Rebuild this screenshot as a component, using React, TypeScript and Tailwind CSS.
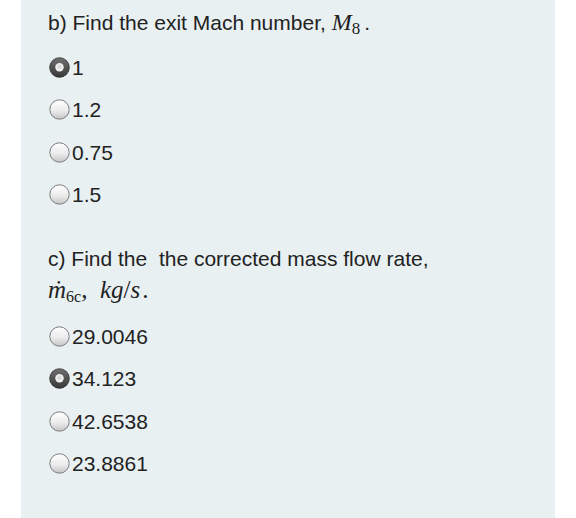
import React from "react";

type Opt = { label: string; checked?: boolean };

const partB: Opt[] = [{ label: "1", checked: true }, { label: "1.2" }, { label: "0.75" }, { label: "1.5" }];
const partC: Opt[] = [
  { label: "29.0046" },
  { label: "34.123", checked: true },
  { label: "42.6538" },
  { label: "23.8861" },
];

function Radio({ checked }: { checked?: boolean }) {
  return (
    <svg width="21" height="21" viewBox="0 0 21 21" className="shrink-0">
      <defs>
        <linearGradient id="rOff" x1="0" y1="0" x2="0" y2="1">
          <stop offset="0" stopColor="#ffffff" />
          <stop offset="0.55" stopColor="#ececec" />
          <stop offset="1" stopColor="#c4c4c4" />
        </linearGradient>
        <linearGradient id="rOn" x1="0" y1="0" x2="0" y2="1">
          <stop offset="0" stopColor="#707070" />
          <stop offset="1" stopColor="#383838" />
        </linearGradient>
        <radialGradient id="dot" cx="0.5" cy="0.45" r="0.6">
          <stop offset="0" stopColor="#d0d0d0" />
          <stop offset="1" stopColor="#ffffff" />
        </radialGradient>
      </defs>
      {checked ? (
        <>
          <circle cx="10.5" cy="10.5" r="9.8" fill="url(#rOn)" stroke="#2e2e2e" strokeWidth="0.8" />
          <circle cx="10.5" cy="10.2" r="4.2" fill="url(#dot)" />
        </>
      ) : (
        <circle cx="10.5" cy="10.5" r="9.7" fill="url(#rOff)" stroke="#7c7c7c" strokeWidth="1" />
      )}
    </svg>
  );
}

function Options({ items }: { items: Opt[] }) {
  return (
    <ul className="flex flex-col pl-[5px]">
      {items.map((o) => (
        <li key={o.label} className="flex h-[42.5px] items-center gap-[2px]">
          <Radio checked={o.checked} />
          <span className="text-[21px] leading-none text-[#222]">{o.label}</span>
        </li>
      ))}
    </ul>
  );
}

export default function App() {
  return (
    <div className="h-[518px] w-[576px] bg-white font-['Liberation_Sans',Arial,sans-serif]">
      <section className="ml-[21px] h-full w-[534px] bg-[#e8f0f2] pl-[23px] pt-[9px]">
        <p className="h-[26px] whitespace-nowrap pl-[4px] text-[21px] leading-[26px] text-[#222]">
          b) Find the exit Mach number,{" "}
          <span className="font-['Liberation_Serif',serif] text-[24px] italic">M</span>
          <sub className="font-['Liberation_Serif',serif] text-[17px]">8</sub>
          <span className="ml-[4px]">.</span>
        </p>

        <div className="mt-[11px]">
          <Options items={partB} />
        </div>

        <p className="mt-[30px] h-[26px] whitespace-nowrap pl-[4px] text-[21px] leading-[26px] text-[#222]">
          c) Find the&nbsp; the corrected mass flow rate,
        </p>
        <p className="mt-[5px] h-[26px] whitespace-nowrap pl-[4px] font-['Liberation_Serif','DejaVu_Serif',serif] text-[25px] leading-[26px] text-[#222]">
          <span className="italic">ṁ</span>
          <sub className="text-[16px]">6c</sub>,&nbsp; <span className="italic">kg</span>/<span className="italic">s</span>
          <span className="ml-[2px]">.</span>
        </p>

        <div className="mt-[12px]">
          <Options items={partC} />
        </div>
      </section>
    </div>
  );
}
